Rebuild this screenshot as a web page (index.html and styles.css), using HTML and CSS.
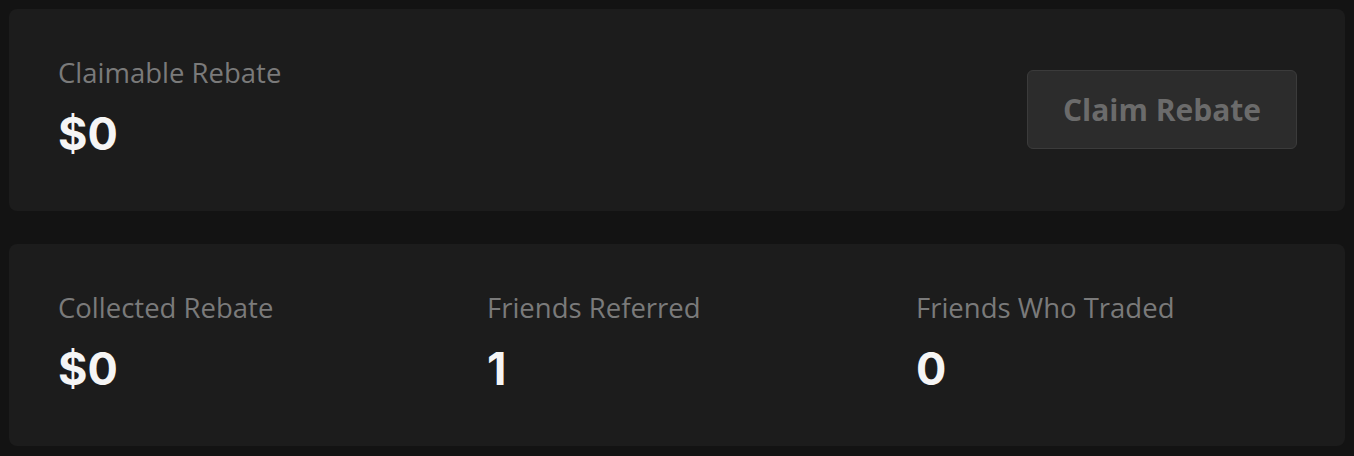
FILE: index.html
```html
<!DOCTYPE html>
<html lang="en">
    <head>
        <title>Rebate Overview</title>
        <meta charset="UTF-8">
        <meta name="viewport" content="width=device-width, initial-scale=1.0">
        <link rel="stylesheet" href="styles.css">
    </head>
    <body>
        <div class="page">
            <section class="card claim-card">
                <div class="stat">
                    <div class="stat-label">Claimable Rebate</div>
                    <div class="stat-value">$0</div>
                </div>
                <button class="claim-btn" type="button" disabled>Claim Rebate</button>
            </section>

            <section class="card stats-card">
                <div class="stat">
                    <div class="stat-label">Collected Rebate</div>
                    <div class="stat-value">$0</div>
                </div>
                <div class="stat">
                    <div class="stat-label">Friends Referred</div>
                    <div class="stat-value">1</div>
                </div>
                <div class="stat">
                    <div class="stat-label">Friends Who Traded</div>
                    <div class="stat-value">0</div>
                </div>
            </section>
        </div>
    </body>
</html>
```

FILE: styles.css
```css
html {
    background-color: #131313;
}
body {
    margin: 0;
    padding: 0;
    background-color: #131313;
    font-family: "Open Sans", "Noto Sans", sans-serif;
}
.page {
    display: flex;
    flex-direction: column;
    gap: 33px;
    padding: 9px 9px 0 9px;
}
.card {
    background-color: #1c1c1c;
    border-radius: 8px;
    padding: 48px 48px 49px 49px;
    box-sizing: border-box;
    height: 202px;
}
.claim-card {
    display: flex;
    justify-content: space-between;
    align-items: center;
}
.stats-card {
    display: grid;
    grid-template-columns: repeat(3, 1fr);
    column-gap: 48px;
}
.stat-label {
    font-size: 27.5px;
    line-height: 32px;
    color: #7a7a7a;
}
.stat-value {
    margin-top: 17px;
    font-family: Inter, Roboto, sans-serif;
    font-weight: 700;
    font-size: 45px;
    line-height: 56px;
    color: #f5f5f5;
}
.claim-btn {
    width: 270px;
    height: 79px;
    background-color: #2c2c2c;
    border: 1px solid #3b3b3b;
    border-radius: 6px;
    color: #6b6b6b;
    font-family: "Open Sans", "Noto Sans", sans-serif;
    font-weight: 700;
    font-size: 30px;
    cursor: not-allowed;
}
```
